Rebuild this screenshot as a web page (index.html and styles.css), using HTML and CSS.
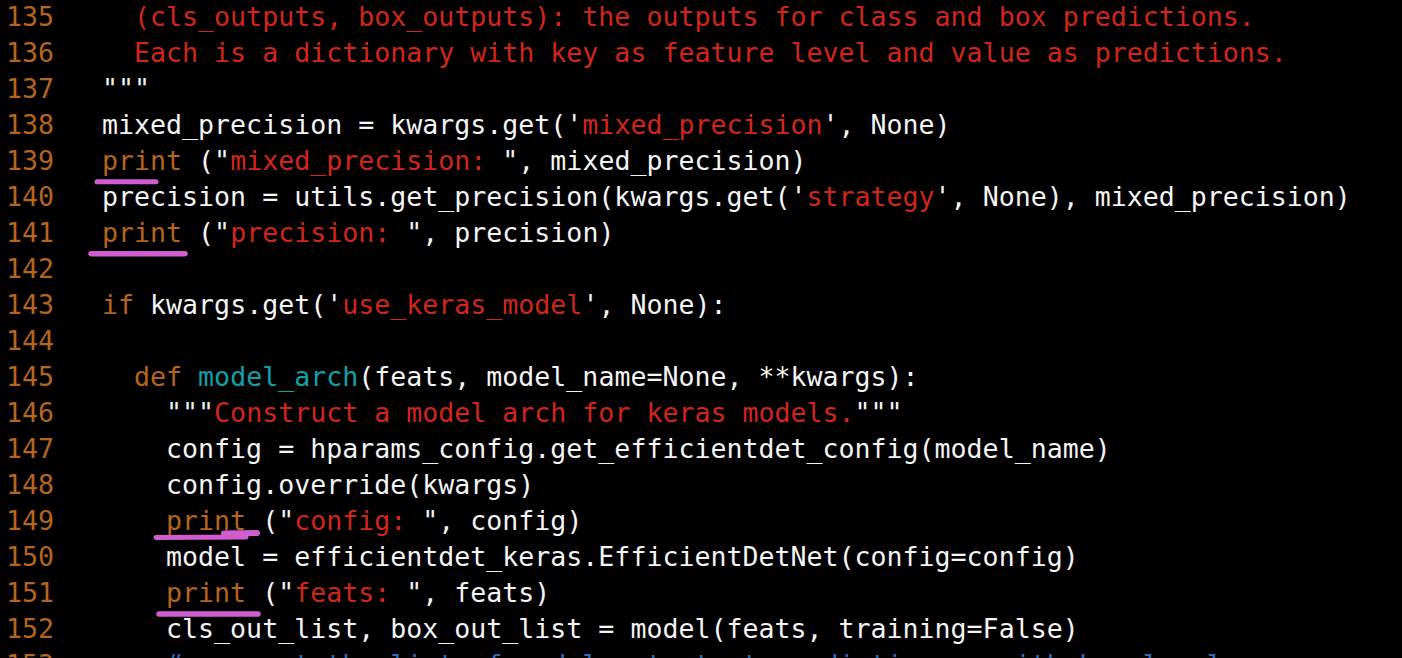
FILE: index.html
```html
<!DOCTYPE html>
<html>
<head>
<meta charset="utf-8">
<link rel="stylesheet" href="styles.css">
</head>
<body>
<div class="term">
  <div class="code">
    <div class="row"><span class="num">135</span><span class="src">    <span class="str">(cls_outputs, box_outputs): the outputs for class and box predictions.</span></span></div>
    <div class="row"><span class="num">136</span><span class="src">    <span class="str">Each is a dictionary with key as feature level and value as predictions.</span></span></div>
    <div class="row"><span class="num">137</span><span class="src">  """</span></div>
    <div class="row"><span class="num">138</span><span class="src">  mixed_precision = kwargs.get('<span class="str">mixed_precision</span>', None)</span></div>
    <div class="row"><span class="num">139</span><span class="src">  <span class="kw">print</span> ("<span class="str">mixed_precision: </span>", mixed_precision)</span></div>
    <div class="row"><span class="num">140</span><span class="src">  precision = utils.get_precision(kwargs.get('<span class="str">strategy</span>', None), mixed_precision)</span></div>
    <div class="row"><span class="num">141</span><span class="src">  <span class="kw">print</span> ("<span class="str">precision: </span>", precision)</span></div>
    <div class="row"><span class="num">142</span><span class="src"></span></div>
    <div class="row"><span class="num">143</span><span class="src">  <span class="kw">if</span> kwargs.get('<span class="str">use_keras_model</span>', None):</span></div>
    <div class="row"><span class="num">144</span><span class="src"></span></div>
    <div class="row"><span class="num">145</span><span class="src">    <span class="kw">def</span> <span class="fn">model_arch</span>(feats, model_name=None, **kwargs):</span></div>
    <div class="row"><span class="num">146</span><span class="src">      """<span class="str">Construct a model arch for keras models.</span>"""</span></div>
    <div class="row"><span class="num">147</span><span class="src">      config = hparams_config.get_efficientdet_config(model_name)</span></div>
    <div class="row"><span class="num">148</span><span class="src">      config.override(kwargs)</span></div>
    <div class="row"><span class="num">149</span><span class="src">      <span class="kw">print</span> ("<span class="str">config: </span>", config)</span></div>
    <div class="row"><span class="num">150</span><span class="src">      model = efficientdet_keras.EfficientDetNet(config=config)</span></div>
    <div class="row"><span class="num">151</span><span class="src">      <span class="kw">print</span> ("<span class="str">feats: </span>", feats)</span></div>
    <div class="row"><span class="num">152</span><span class="src">      cls_out_list, box_out_list = model(feats, training=False)</span></div>
    <div class="row"><span class="num">153</span><span class="src">      <span class="cm"># convert the list of model outputs to a dictionary with key=level.</span></span></div>
  </div>
  <svg class="marks" width="1402" height="658" viewBox="0 0 1402 658">
    <g stroke="#d15ccf" stroke-linecap="round" fill="none">
      <path d="M97 181.8 L156 181.8" stroke-width="5"/>
      <path d="M91 253.7 L185 253.7" stroke-width="5.5"/>
      <path d="M156 537.5 L246 537" stroke-width="5"/>
      <path d="M224 533.5 L257 533" stroke-width="6"/>
      <path d="M159 614 L258 614" stroke-width="5.5"/>
    </g>
  </svg>
</div>
</body>
</html>
```

FILE: styles.css
```css
html, body {
  margin: 0;
  padding: 0;
  background: #000;
}

.term {
  position: relative;
  width: 1402px;
  height: 658px;
  overflow: hidden;
  background: #000;
}

.code {
  display: flex;
  flex-direction: column;
  margin-top: -1px;
  padding-left: 6px;
  font-family: "DejaVu Sans Mono", "Liberation Mono", monospace;
  font-size: 26.6px;
  line-height: 36px;
  color: #f4f4f4;
}

.row {
  display: flex;
  height: 36px;
  white-space: pre;
}

.num {
  width: 64px;
  flex: none;
  color: #b5651d;
}

.src {
  white-space: pre;
}

.str { color: #d2261d; }
.kw { color: #b5651d; }
.fn { color: #12a2a6; }
.cm { color: #3468c0; }

.marks {
  position: absolute;
  left: 0;
  top: 0;
  pointer-events: none;
}
```
